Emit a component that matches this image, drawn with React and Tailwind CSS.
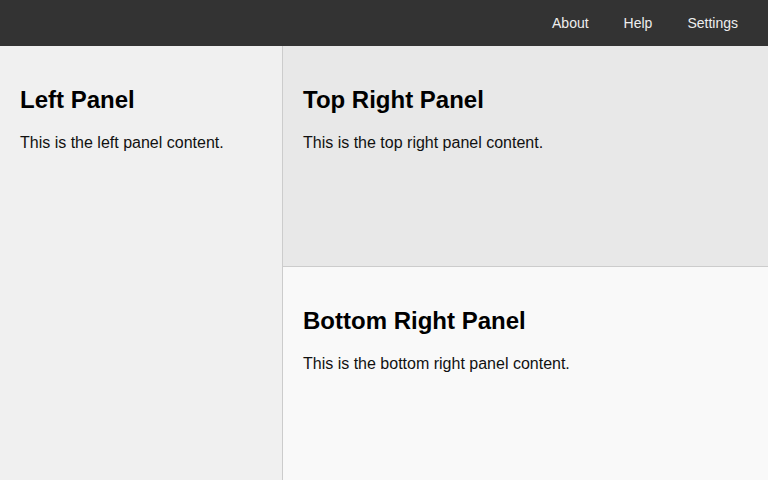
import React from 'react';

const links = ['About', 'Help', 'Settings'];

function Panel({ title, text, className }) {
  return (
    <div className={`p-5 ${className}`}>
      <h2 className="mt-5 text-2xl font-bold leading-7 text-black">{title}</h2>
      <p className="mt-5 text-base leading-[18px] text-[#111]">{text}</p>
    </div>
  );
}

export default function App() {
  return (
    <div className="flex h-[480px] w-full flex-col overflow-hidden font-['Liberation_Sans',Arial,sans-serif]">
      <header className="flex h-[46px] shrink-0 items-center justify-end gap-[35px] bg-[#333] pr-[30px]">
        {links.map((l) => (
          <a key={l} href="#" className="text-sm text-[#eee]">
            {l}
          </a>
        ))}
      </header>
      <div className="flex flex-1">
        <Panel
          title="Left Panel"
          text="This is the left panel content."
          className="w-[283px] shrink-0 border-r border-[#ccc] bg-[#f0f0f0]"
        />
        <div className="flex flex-1 flex-col">
          <Panel
            title="Top Right Panel"
            text="This is the top right panel content."
            className="h-[221px] shrink-0 border-b border-[#ccc] bg-[#e8e8e8]"
          />
          <Panel
            title="Bottom Right Panel"
            text="This is the bottom right panel content."
            className="flex-1 bg-[#f9f9f9]"
          />
        </div>
      </div>
    </div>
  );
}
